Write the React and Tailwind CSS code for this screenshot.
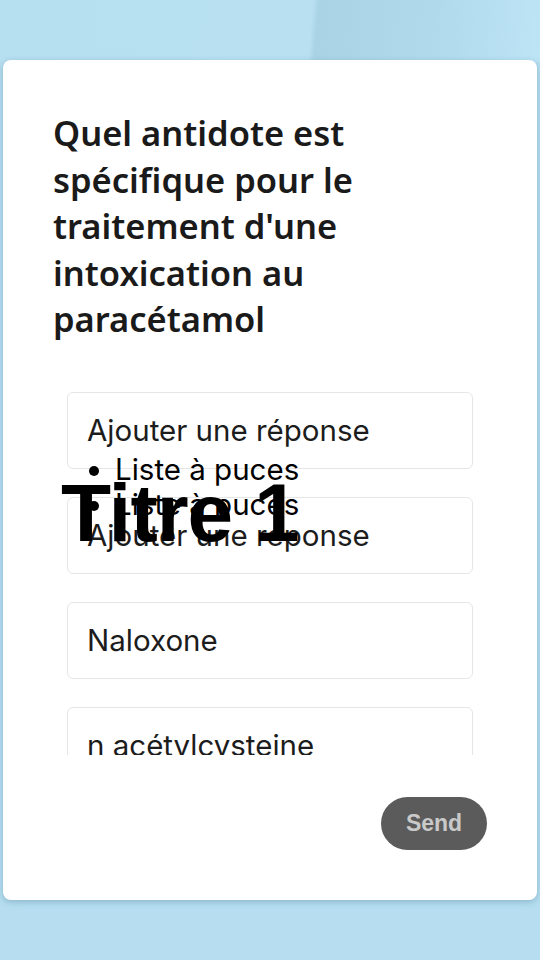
export default function App() {
    const answers = ["Ajouter une réponse", "Ajouter une réponse", "Naloxone", "n acétylcysteine"]

    return (
        <div className="w-[540px] h-[960px] overflow-hidden bg-[#b6def0] bg-[linear-gradient(95deg,#b6dff0_0px,#b8e0f1_312px,#aad3e6_318px,#b0d9ec_430px,#bce4f5_540px)] bg-[length:100%_62px] bg-no-repeat pt-[60px] px-[3px]" style={{ fontFamily: "Inter, 'Noto Sans', sans-serif" }}>
            <div className="relative bg-white rounded-[8px] shadow-[0_2px_6px_rgba(60,110,140,0.35)] h-[840px] flex flex-col">
                {/* question */}
                <div className="pl-[50px] pt-[50px]">
                    <h1 className="w-[340px] text-[34.5px] leading-[46.5px] font-semibold text-[#1a1a1a]" style={{ fontFamily: "'Noto Sans', sans-serif" }}>
                        Quel antidote est spécifique pour le traitement d'une intoxication au paracétamol
                    </h1>
                </div>

                {/* answers list */}
                <div className="mt-[49px] h-[363px] overflow-hidden px-[64px]">
                    <div className="flex flex-col gap-[28px]">
                        {answers.map((a, i) => (
                            <div key={i} className="h-[77px] shrink-0 border border-[#e6e6e6] rounded-[6px] flex items-center px-[19px] text-[29.5px] text-[#1c1c1c]">
                                {a}
                            </div>
                        ))}
                    </div>
                </div>

                <div className="flex justify-end pr-[50px] mt-[42px]">
                    <button className="w-[106px] h-[53px] rounded-full bg-[#5b5b5b] text-[#c9c9c9] text-[23px] font-bold" style={{ fontFamily: "'Liberation Sans', Arial, sans-serif" }}>
                        Send
                    </button>
                </div>

                {/* leftover editor blocks lying over the list */}
                <div className="absolute left-[59px] top-[392px] pointer-events-none text-black">
                    <ul className="list-disc pl-[53px] text-[29.5px] leading-[35px]">
                        <li>Liste à puces</li>
                        <li>Liste à puces</li>
                    </ul>
                </div>
                <div className="absolute left-[58px] top-[412px] pointer-events-none text-[82px] font-bold leading-none text-black tracking-[-1px]" style={{ fontFamily: "'Liberation Sans', Arial, sans-serif" }}>
                    Titre 1
                </div>
            </div>
        </div>
    )
}
